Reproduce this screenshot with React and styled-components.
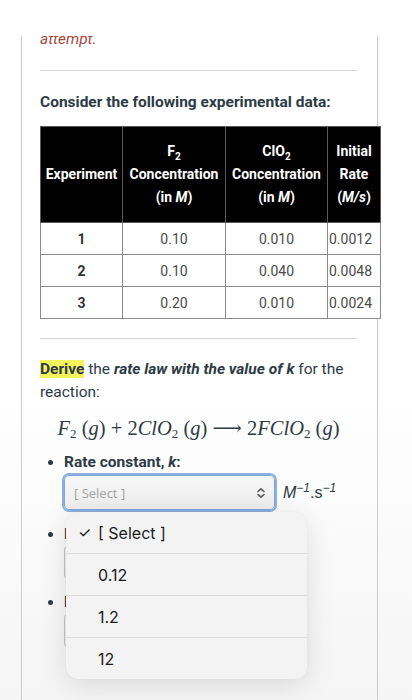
import React from "react";
import styled, { createGlobalStyle } from "styled-components";

const Global = createGlobalStyle`
  html, body { margin: 0; padding: 0; }
  body {
    background: linear-gradient(#ffffff 0, #ffffff 55%, #f5f5f5 100%);
    min-height: 700px;
    font-family: Roboto, "Liberation Sans", sans-serif;
    color: #2d3b45;
  }
`;

const Page = styled.div`
  position: relative;
  height: 700px;
  overflow: hidden;
`;

const TopCover = styled.div`
  position: absolute;
  top: 0;
  left: 0;
  right: 0;
  height: 36px;
  background: #ffffff;
  z-index: 5;
`;

const Card = styled.div`
  margin-left: 21px;
  width: 317px;
  min-height: 700px;
  border-left: 1px solid #c9ced2;
  border-right: 1px solid #c9ced2;
  padding: 0 20px 0 18px;
  box-sizing: content-box;
`;

const Note = styled.p`
  margin: 28px 0 0;
  font-size: 15.5px;
  line-height: 22px;
  font-style: italic;
  color: #a3493f;
`;

const Rule = styled.hr`
  border: none;
  border-top: 1px solid #d7d7d7;
  margin: ${(p) => p.$top}px 0 0;
  height: 0;
`;

const Lead = styled.p`
  margin: 20px 0 0;
  font-size: 15.5px;
  line-height: 22px;
  font-weight: 700;
  color: #2d3b45;
  white-space: nowrap;
`;

const DataTable = styled.table`
  margin-top: 13px;
  border-collapse: collapse;
  table-layout: fixed;
  width: 340px;
  font-family: Roboto, "Liberation Sans", sans-serif;
  font-size: 14px;
  position: relative;
  z-index: 1;
  background: #fff;
`;

const Th = styled.th`
  background: #000;
  color: #fff;
  font-weight: 700;
  line-height: 23px;
  padding: 13px 0;
  border: 1px solid #5a5a5a;
  text-align: center;
  white-space: nowrap;
  overflow: visible;
`;

const Td = styled.td`
  height: 31px;
  padding: 0 1px;
  border: 1px solid #8c8c8c;
  text-align: ${(p) => (p.$left ? "left" : "center")};
  color: ${(p) => (p.$bold ? "#333" : "#4a4a4a")};
  font-weight: ${(p) => (p.$bold ? 700 : 400)};
  white-space: nowrap;
`;

const Prompt = styled.p`
  margin: 19px 0 0;
  font-size: 15.5px;
  line-height: 23px;
  color: #2d3b45;
`;

const Mark = styled.strong`
  background: #f3f35b;
  color: #2d3b45;
`;

const Equation = styled.div`
  margin-top: 9px;
  height: 30px;
  line-height: 30px;
  text-align: center;
  font-family: "Liberation Serif", "DejaVu Serif", serif;
  font-size: 20.5px;
  color: #2d3b45;
  white-space: nowrap;
  sub {
    font-size: 13px;
    vertical-align: -3px;
    line-height: 0;
  }
`;

const Items = styled.ul`
  margin: 8px 0 0;
  padding-left: 24px;
  list-style: disc;
`;

const Item = styled.li`
  position: relative;
  font-size: 15.5px;
  line-height: 22px;
  margin-bottom: 11px;
  &::marker { color: #2d3b45; }
`;

const Label = styled.div`
  font-weight: 700;
  color: #2d3b45;
`;

const Answer = styled.div`
  display: flex;
  align-items: center;
`;

const SelectBox = styled.div`
  width: 211px;
  height: 35px;
  margin-top: ${(p) => (p.$focus ? 2 : 0)}px;
  margin-bottom: ${(p) => (p.$focus ? 2 : 0)}px;
  box-sizing: border-box;
  border: 1px solid ${(p) => (p.$focus ? "#7fa7d8" : "#c5c5c5")};
  border-radius: 5px;
  box-shadow: ${(p) => (p.$focus ? "0 0 0 2px #8cb0de" : "none")};
  background: linear-gradient(#f6f6f6, #eeeeee);
  display: flex;
  align-items: center;
  justify-content: space-between;
  padding: 0 8px 0 9px;
  font-family: "Open Sans", sans-serif;
  font-size: 13px;
  color: #a4a4a4;
`;

const Unit = styled.span`
  margin-left: 8px;
  font-family: "Liberation Sans", Arial, sans-serif;
  font-size: 16px;
  color: #2d3b45;
  sup {
    font-size: 12px;
    vertical-align: 6px;
    line-height: 0;
  }
`;

const Menu = styled.div`
  position: absolute;
  top: 61px;
  left: 2px;
  width: 241px;
  background: #f3f3f3;
  border-radius: 12px;
  box-shadow: 0 6px 28px rgba(0, 0, 0, 0.12), 0 0 2px rgba(0, 0, 0, 0.06);
  z-index: 10;
  overflow: hidden;
  font-family: Inter, "Noto Sans", sans-serif;
`;

const Option = styled.div`
  height: 41px;
  display: flex;
  align-items: center;
  padding-left: 12px;
  font-size: 16px;
  color: #1a1a1a;
  border-top: ${(p) => (p.$first ? "none" : "1px solid #dcdcdc")};
`;

const Check = styled.span`
  width: 20px;
  font-size: 15px;
  color: #111;
`;

const Chevron = () => (
  <svg width="10" height="12" viewBox="0 0 10 12" fill="none" stroke="#555" strokeWidth="1.6" strokeLinecap="round" strokeLinejoin="round">
    <path d="M2 4.5 L5 1.8 L8 4.5" />
    <path d="M2 7.5 L5 10.2 L8 7.5" />
  </svg>
);

const rows = [
  ["1", "0.10", "0.010", "0.0012"],
  ["2", "0.10", "0.040", "0.0048"],
  ["3", "0.20", "0.010", "0.0024"],
];

const options = ["[ Select ]", "0.12", "1.2", "12"];

export default function App() {
  return (
    <>
      <Global />
      <Page>
        <TopCover />
        <Card>
          <Note>attempt.</Note>
          <Rule $top={20} />
          <Lead>Consider the following experimental data:</Lead>
          <DataTable>
            <colgroup>
              <col style={{ width: 82 }} />
              <col style={{ width: 103 }} />
              <col style={{ width: 102 }} />
              <col style={{ width: 53 }} />
            </colgroup>
            <thead>
              <tr>
                <Th>
                  <br />Experiment<br />&nbsp;
                </Th>
                <Th>
                  F<sub style={{ fontSize: 10, lineHeight: 0 }}>2</sub>
                  <br />Concentration<br />(in <i>M</i>)
                </Th>
                <Th>
                  ClO<sub style={{ fontSize: 10, lineHeight: 0 }}>2</sub>
                  <br />Concentration<br />(in <i>M</i>)
                </Th>
                <Th>
                  Initial<br />Rate<br />(<i>M/s</i>)
                </Th>
              </tr>
            </thead>
            <tbody>
              {rows.map((r) => (
                <tr key={r[0]}>
                  <Td $bold>{r[0]}</Td>
                  <Td>{r[1]}</Td>
                  <Td>{r[2]}</Td>
                  <Td $left>{r[3]}</Td>
                </tr>
              ))}
            </tbody>
          </DataTable>
          <Rule $top={19} />
          <Prompt>
            <Mark>Derive</Mark> the <strong><em>rate law with the value of k</em></strong> for the reaction:
          </Prompt>
          <Equation>
            <i>F</i><sub>2</sub> (<i>g</i>) + 2<i>ClO</i><sub>2</sub> (<i>g</i>) ⟶ 2<i>FClO</i><sub>2</sub> (<i>g</i>)
          </Equation>
          <Items>
            <Item>
              <Label>
                Rate constant, <em>k</em>:
              </Label>
              <Answer>
                <SelectBox $focus>
                  <span>[ Select ]</span>
                  <Chevron />
                </SelectBox>
                <Unit>
                  <i>M</i><sup><i>−1</i></sup>.s<sup><i>−1</i></sup>
                </Unit>
              </Answer>
              <Menu>
                {options.map((o, i) => (
                  <Option key={o} $first={i === 0}>
                    <Check>{i === 0 ? "✓" : ""}</Check>
                    {o}
                  </Option>
                ))}
              </Menu>
            </Item>
            <Item>
              <Label>Reaction order in F₂:</Label>
              <Answer>
                <SelectBox>
                  <span>[ Select ]</span>
                  <Chevron />
                </SelectBox>
              </Answer>
            </Item>
            <Item>
              <Label>Reaction order in ClO₂:</Label>
              <Answer>
                <SelectBox>
                  <span>[ Select ]</span>
                  <Chevron />
                </SelectBox>
              </Answer>
            </Item>
          </Items>
        </Card>
      </Page>
    </>
  );
}
